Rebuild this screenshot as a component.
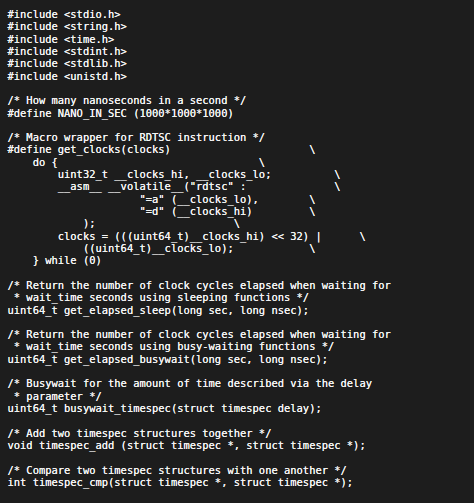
const code = `#include <stdio.h>
#include <string.h>
#include <time.h>
#include <stdint.h>
#include <stdlib.h>
#include <unistd.h>

/* How many nanoseconds in a second */
#define NANO_IN_SEC (1000*1000*1000)

/* Macro wrapper for RDTSC instruction */
#define get_clocks(clocks)                      \\
    do {                                \\
        uint32_t __clocks_hi, __clocks_lo;          \\
        __asm__ __volatile__("rdtsc" :              \\
                     "=a" (__clocks_lo),        \\
                     "=d" (__clocks_hi)         \\
            );                      \\
        clocks = (((uint64_t)__clocks_hi) << 32) |      \\
            ((uint64_t)__clocks_lo);            \\
    } while (0)

/* Return the number of clock cycles elapsed when waiting for
 * wait_time seconds using sleeping functions */
uint64_t get_elapsed_sleep(long sec, long nsec);

/* Return the number of clock cycles elapsed when waiting for
 * wait_time seconds using busy-waiting functions */
uint64_t get_elapsed_busywait(long sec, long nsec);

/* Busywait for the amount of time described via the delay
 * parameter */
uint64_t busywait_timespec(struct timespec delay);

/* Add two timespec structures together */
void timespec_add (struct timespec *, struct timespec *);

/* Compare two timespec structures with one another */
int timespec_cmp(struct timespec *, struct timespec *);`;

export default function App() {
  return (
    <div className="w-[474px] h-[503px] bg-[#1d1d1d] overflow-hidden">
      <pre className="pl-[7.5px] pt-[8px] text-[10.45px] leading-[12.32px] text-[#f4f4f4] font-['DejaVu_Sans_Mono',monospace] whitespace-pre [text-shadow:0_0_0.4px_#ffffff]">
        {code}
      </pre>
    </div>
  );
}
